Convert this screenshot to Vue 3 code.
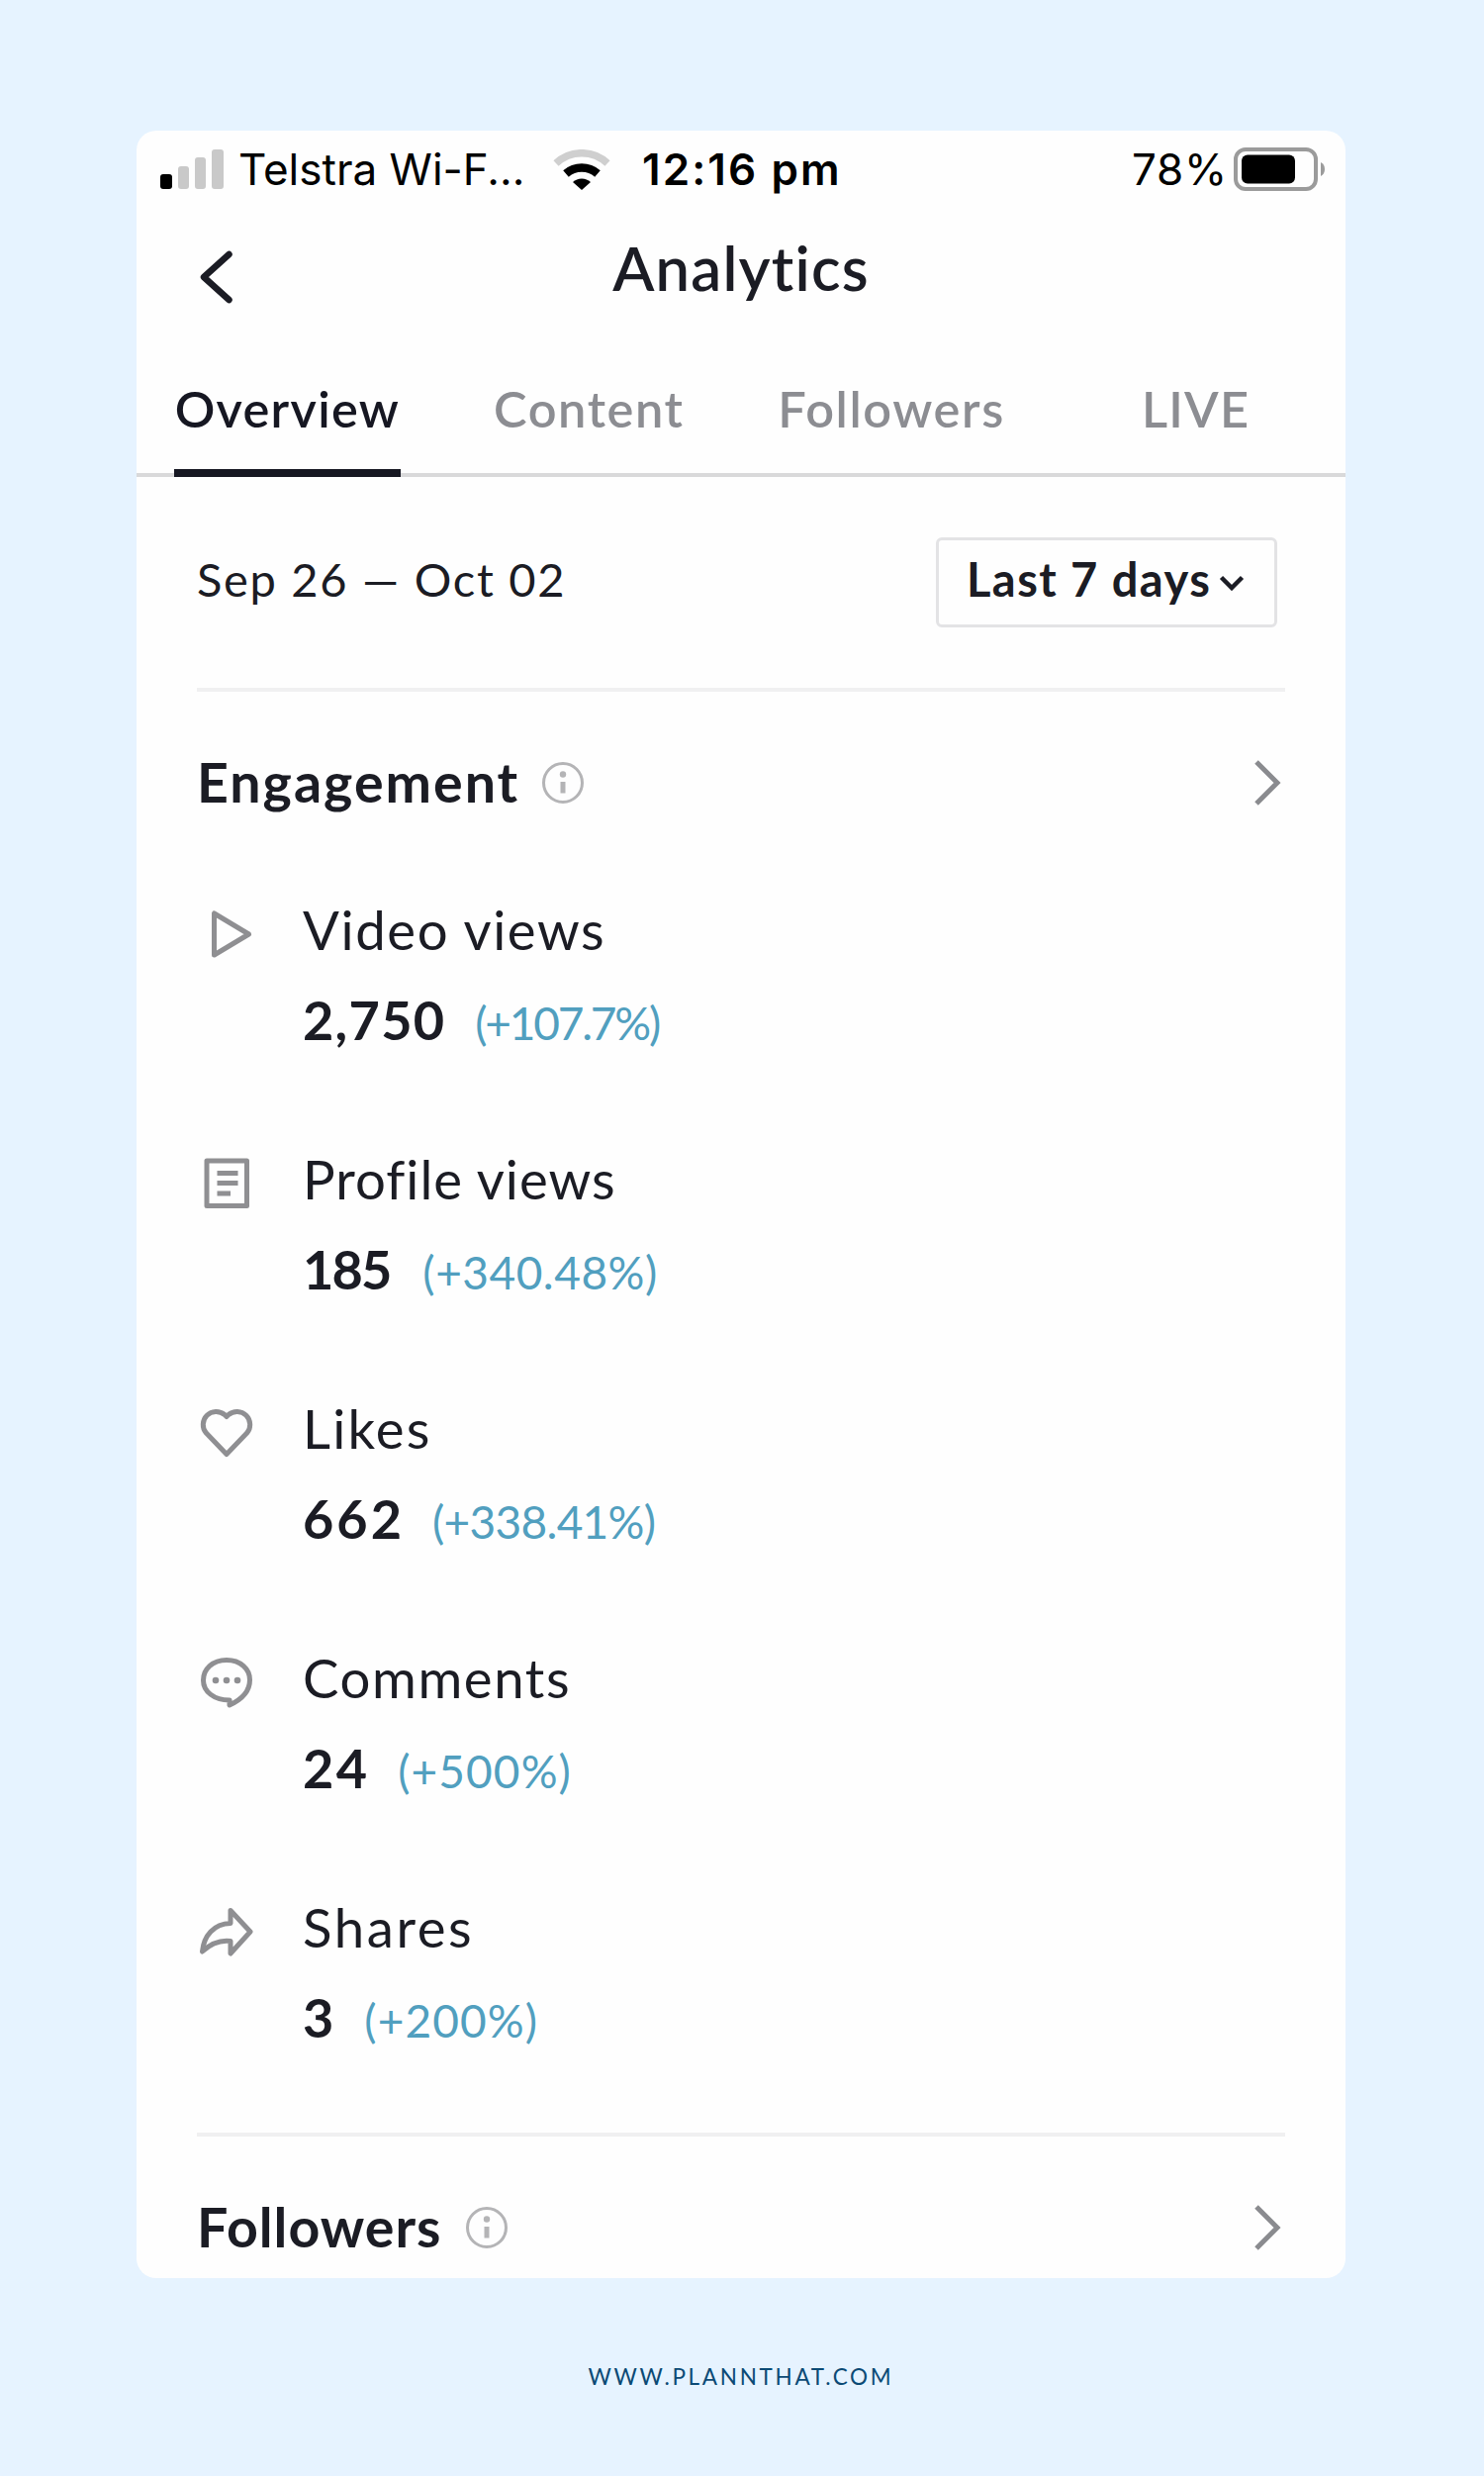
<template>
  <div class="page">
    <div class="phone">
      <div class="status-bar">
        <svg class="signal" viewBox="0 0 64 40">
          <rect x="0" y="25" width="12" height="15" rx="3" fill="#000" />
          <rect x="18" y="17" width="11" height="23" rx="3" fill="#c9c9c9" />
          <rect x="35" y="8" width="11" height="32" rx="3" fill="#c9c9c9" />
          <rect x="52" y="0" width="12" height="40" rx="3" fill="#c9c9c9" />
        </svg>
        <span class="carrier">Telstra Wi-F...</span>
        <svg class="wifi" viewBox="0 0 58 41">
          <path d="M3 14A38 38 0 0 1 55 14" fill="none" stroke="#cfcfcf" stroke-width="7.5" />
          <path d="M13 24.5A24.5 24.5 0 0 1 45 24.5" fill="none" stroke="#000" stroke-width="8.5" />
          <path d="M20 33A13 13 0 0 1 38 33L29 41Z" fill="#000" />
        </svg>
        <span class="time">12:16 pm</span>
        <span class="battery-level">78%</span>
        <svg class="battery" viewBox="0 0 93 44">
          <rect x="2" y="2" width="81" height="40" rx="10" fill="none" stroke="#9b9b9b" stroke-width="4" />
          <rect x="8" y="7.5" width="54" height="29" rx="6" fill="#000" />
          <path d="M88 15Q92 17 92 22Q92 27 88 29Z" fill="#9b9b9b" />
        </svg>
      </div>

      <div class="nav-bar">
        <svg class="back" viewBox="0 0 36 56">
          <path d="M31.5 5L6 28L31.5 51" fill="none" stroke="#1b1c24" stroke-width="6.5" stroke-linecap="round" stroke-linejoin="round" />
        </svg>
        <h1>Analytics</h1>
      </div>

      <div class="tabs">
        <div
          v-for="tab in tabs"
          :key="tab.id"
          class="tab"
          :class="[tab.id, { active: activeTab === tab.id }]"
          @click="activeTab = tab.id"
        >
          <span>{{ tab.label }}</span>
        </div>
      </div>

      <div class="content">
        <div class="date-row">
          <span class="date-range">Sep 26 — Oct 02</span>
          <button class="range-select">
            <span>Last 7 days</span>
            <svg viewBox="0 0 26 16">
              <path d="M2.5 2.5L13 13L23.5 2.5" fill="none" stroke="#1b1c24" stroke-width="4.5" />
            </svg>
          </button>
        </div>

        <div class="section-header">
          <h2 class="engagement">Engagement</h2>
          <svg class="info" viewBox="0 0 42 42">
            <circle cx="21" cy="21" r="19.5" />
            <circle class="dot" cx="21" cy="12.5" r="3.2" />
            <path d="M21 20V31.5" />
          </svg>
          <svg class="chevron" viewBox="0 0 28 48">
            <path d="M3 3L24 24L3 45" />
          </svg>
        </div>

        <div class="stats">
          <div v-for="stat in stats" :key="stat.id" class="stat" :class="stat.id">
            <svg class="stat-icon" viewBox="0 0 58 58">
              <path v-for="(d, i) in stat.paths" :key="i" :d="d" />
              <template v-if="stat.id === 'comments'">
                <circle cx="18" cy="28" r="3.3" />
                <circle cx="29" cy="28" r="3.3" />
                <circle cx="40" cy="28" r="3.3" />
              </template>
            </svg>
            <div class="stat-body">
              <div class="stat-label">{{ stat.label }}</div>
              <div class="stat-numbers">
                <span class="stat-value">{{ stat.value }}</span>
                <span class="stat-change">({{ stat.change }})</span>
              </div>
            </div>
          </div>
        </div>

        <div class="section-header">
          <h2 class="followers">Followers</h2>
          <svg class="info" viewBox="0 0 42 42">
            <circle cx="21" cy="21" r="19.5" />
            <circle class="dot" cx="21" cy="12.5" r="3.2" />
            <path d="M21 20V31.5" />
          </svg>
          <svg class="chevron" viewBox="0 0 28 48">
            <path d="M3 3L24 24L3 45" />
          </svg>
        </div>
      </div>
    </div>

    <div class="footer">WWW.PLANNTHAT.COM</div>
  </div>
</template>

<script setup>
import { ref } from 'vue'

const activeTab = ref('overview')

const tabs = [
  { id: 'overview', label: 'Overview' },
  { id: 'content-tab', label: 'Content' },
  { id: 'followers-tab', label: 'Followers' },
  { id: 'live', label: 'LIVE' }
]

const stats = [
  {
    id: 'video',
    label: 'Video views',
    value: '2,750',
    change: '+107.7%',
    paths: ['M16.5 9V51L51.5 30Z']
  },
  {
    id: 'profile',
    label: 'Profile views',
    value: '185',
    change: '+340.48%',
    paths: ['M9 7H49.5V52.5H9Z', 'M19.5 19.5H40.5', 'M19.5 29.5H40.5', 'M19.5 40H33']
  },
  {
    id: 'likes',
    label: 'Likes',
    value: '662',
    change: '+338.41%',
    paths: ['M29 13.5L27 11.5A13.2 13.2 0 0 0 8.4 30.1L29 51.5L49.6 30.1A13.2 13.2 0 0 0 31 11.5Z']
  },
  {
    id: 'comments',
    label: 'Comments',
    value: '24',
    change: '+500%',
    paths: ['M29 7.5C43 7.5 52.5 16.5 52.5 27.5C52.5 38 45 47 32 53V48C16 48 5.5 39 5.5 28C5.5 16.5 15 7.5 29 7.5Z']
  },
  {
    id: 'shares',
    label: 'Shares',
    value: '3',
    change: '+200%',
    paths: ['M33 8.5L53 30L33 52V39.5C21 38 12 43 4.5 50C6 34 16 22 33 21.5Z']
  }
]
</script>

<style>
body {
  margin: 0;
  background: #e6f3ff;
}
</style>

<style scoped>
.page {
  width: 1500px;
  height: 2502px;
  padding-top: 132px;
  box-sizing: border-box;
  background: #e6f3ff;
  color: #1b1c24;
  font-family: Lato, "Open Sans", sans-serif;
  overflow: hidden;
}

.phone {
  width: 1222px;
  height: 2170px;
  margin-left: 138px;
  background: #fefefe;
  border-radius: 20px;
  overflow: hidden;
}

svg {
  display: block;
  flex: none;
}

span,
h1,
h2 {
  white-space: nowrap;
}

.status-bar {
  display: flex;
  height: 78px;
  padding: 0 20px 0 24px;
  align-items: center;
  box-sizing: border-box;
  color: #000;
  font-family: Inter, "Liberation Sans", sans-serif;
  font-size: 44px;
  line-height: 78px;
}

.signal {
  width: 64px;
  height: 40px;
  margin-right: 15px;
}

.carrier {
  width: 318px;
}

.wifi {
  width: 58px;
  height: 41px;
  margin-right: 32px;
}

.time {
  font-weight: 600;
  letter-spacing: 2.1px;
}

.battery-level {
  margin-left: auto;
  margin-right: 6px;
  letter-spacing: 0.8px;
}

.battery {
  width: 93px;
  height: 44px;
}

.nav-bar {
  display: grid;
  grid-template-columns: 240px 1fr 240px;
  height: 128px;
}

.back {
  width: 36px;
  height: 56px;
  margin: 42px 0 0 62px;
}

h1 {
  margin: 22px 0 0;
  font-size: 61.5px;
  line-height: 76px;
  font-weight: 600;
  letter-spacing: 1.2px;
  text-align: center;
}

.tabs {
  display: flex;
  height: 144px;
  padding: 0 38px;
  box-sizing: border-box;
  box-shadow: inset 0 -4px #d9d9da;
}

.tab {
  height: 144px;
  box-sizing: border-box;
  padding-top: 45px;
  color: #8c8d92;
  font-size: 50.5px;
  line-height: 60px;
  font-weight: 600;
  letter-spacing: 1.6px;
  text-align: center;
}

.tab.active {
  color: #161722;
  border-bottom: 8px solid #161722;
  letter-spacing: 1.3px;
}

.overview {
  width: 229px;
}

.content-tab {
  width: 192px;
  margin-left: 94px;
}

.followers-tab {
  width: 230px;
  margin-left: 95px;
}

.live {
  width: 106px;
  margin-left: 138px;
  letter-spacing: 1.2px;
}

.content {
  padding: 0 61px;
}

.date-row {
  display: flex;
  height: 217px;
  padding-right: 8px;
  box-sizing: border-box;
  align-items: center;
  justify-content: space-between;
  border-bottom: 4px solid #f0f0f1;
}

.date-range {
  margin-top: -7px;
  font-size: 47px;
  line-height: 60px;
  letter-spacing: 1.7px;
}

.range-select {
  display: flex;
  width: 345px;
  height: 91px;
  padding: 0 0 8px 28px;
  align-items: center;
  gap: 8px;
  border: 3px solid #e3e3e5;
  border-radius: 6px;
  background: transparent;
  color: #1b1c24;
  font-family: inherit;
  font-size: 47px;
  font-weight: 700;
  letter-spacing: 1.45px;
}

.range-select svg {
  width: 26px;
  height: 16px;
  margin-top: 8px;
}

.section-header {
  display: flex;
  height: 184px;
  align-items: center;
}

h2 {
  margin: -2px 0 0;
  font-size: 55.5px;
  line-height: 64px;
  font-weight: 700;
}

.engagement {
  width: 349px;
  letter-spacing: 2px;
}

.followers {
  width: 272px;
  letter-spacing: 1px;
}

.info {
  width: 42px;
  height: 42px;
  fill: none;
  stroke: #b4b4b6;
  stroke-width: 3;
}

.info path {
  stroke-width: 5;
}

.info .dot {
  fill: #b4b4b6;
  stroke: none;
}

.chevron {
  width: 28px;
  height: 48px;
  margin-left: auto;
  margin-right: 4px;
  fill: none;
  stroke: #8a8b8f;
  stroke-width: 5;
}

.stats {
  height: 1276px;
  box-sizing: border-box;
  padding-top: 24px;
  border-bottom: 4px solid #f0f0f1;
}

.stat {
  --label-spacing: 1.6px;
  --value-spacing: 0px;
  --change-spacing: 1.1px;
  display: flex;
  height: 252px;
}

.stat.video {
  --value-spacing: 1.3px;
  --change-spacing: -2.2px;
}

.stat.profile {
  --label-spacing: 1px;
  --value-spacing: -1.8px;
  --change-spacing: 0.5px;
}

.stat.likes {
  --label-spacing: 2.2px;
  --value-spacing: 3px;
  --change-spacing: -0.7px;
}

.stat.comments {
  --value-spacing: 2.5px;
}

.stat.shares {
  --label-spacing: 2.6px;
}

.stat-icon {
  width: 58px;
  height: 58px;
  margin: 7px 48px 0 1px;
  fill: none;
  stroke: #8f8f92;
  stroke-width: 5;
  stroke-linejoin: round;
}

.stat-icon circle {
  fill: #8f8f92;
  stroke: none;
}

.stat-label {
  font-size: 54.5px;
  line-height: 64px;
  letter-spacing: var(--label-spacing);
}

.stat-numbers {
  display: flex;
  align-items: baseline;
  margin-top: 28px;
  gap: 31px;
  line-height: 64px;
}

.stat-value {
  margin-right: calc(-1 * var(--value-spacing));
  font-size: 54px;
  font-weight: 700;
  letter-spacing: var(--value-spacing);
}

.stat-change {
  color: #519fbf;
  font-size: 46px;
  letter-spacing: var(--change-spacing);
}

.footer {
  margin-top: 86px;
  padding-right: 2px;
  color: #0b4a75;
  font-size: 22.5px;
  line-height: 28px;
  letter-spacing: 2.7px;
  text-align: center;
}
</style>
